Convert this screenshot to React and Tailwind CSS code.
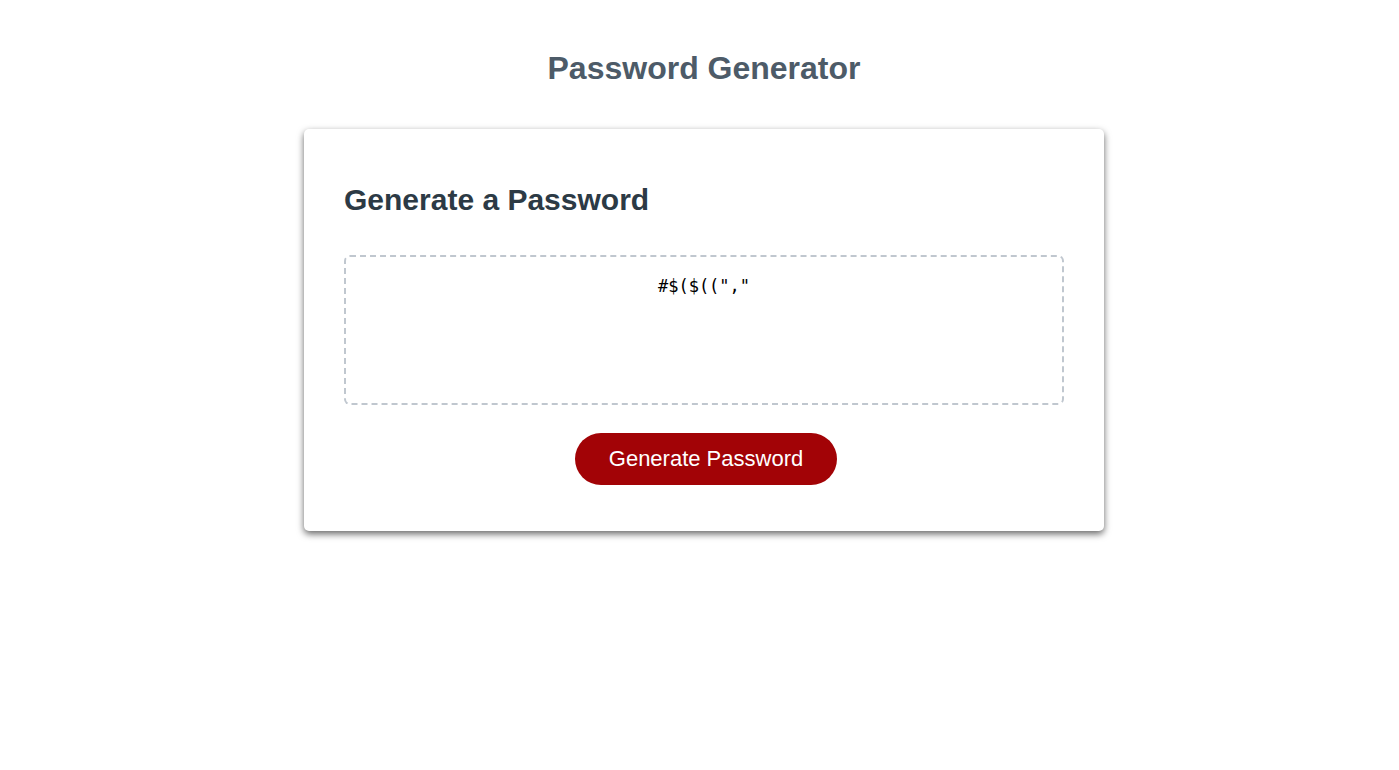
export default function App() {
  return (
    <div className="min-h-[770px] bg-white pl-[9px] font-['Liberation_Sans',Arial,sans-serif]">
      <h1 className="pt-[50px] text-center text-[32px] font-bold leading-[37px] text-[#4d5b68]">
        Password Generator
      </h1>

      <div className="mx-auto mt-[42px] w-[800px] rounded-[5px] bg-white px-[40px] pt-[54px] pb-[46px] shadow-[0_3px_7px_rgba(0,0,0,0.6)]">
        <h2 className="text-[30px] font-bold leading-[34px] text-[#2c3a45]">Generate a Password</h2>

        <textarea
          readOnly
          value={'#$($((","'}
          className="mt-[38px] block h-[150px] w-full resize-none overflow-hidden rounded-[6px] border-2 border-dashed border-[#c0c7cf] px-[15px] pt-[19px] text-center font-['DejaVu_Sans_Mono',monospace] text-[17px] leading-[20px] text-black outline-none"
        />

        <div className="mt-[28px] flex justify-center pl-[4px]">
          <button className="h-[52px] rounded-full bg-[#a20306] px-[34px] text-[22px] leading-[22px] text-white">
            Generate Password
          </button>
        </div>
      </div>
    </div>
  )
}
